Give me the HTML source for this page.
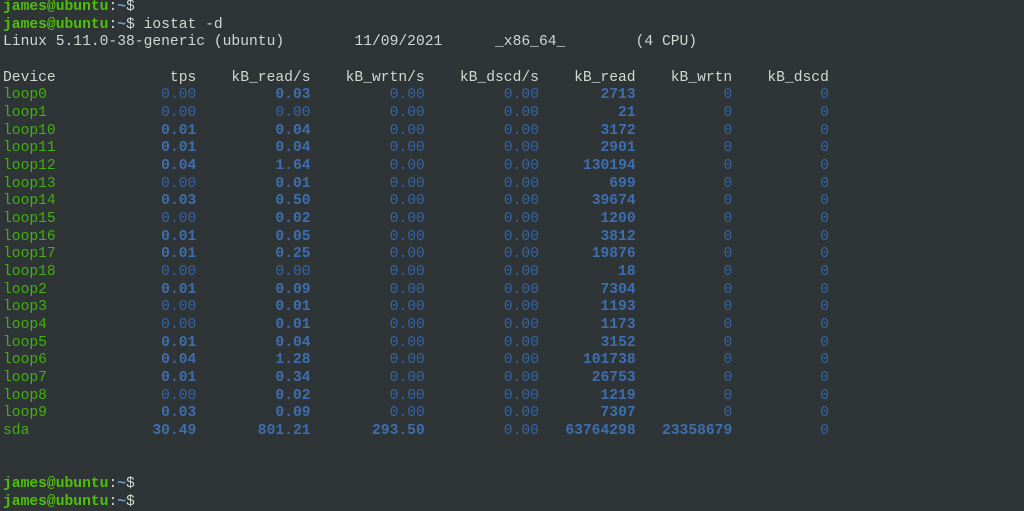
<!DOCTYPE html>
<html><head><style>
html,body{margin:0;padding:0;background:#2f3437;width:1024px;height:501px;overflow:hidden}
pre{margin:0;position:absolute;left:3px;top:-1px;font-family:"Liberation Mono",monospace;font-size:14.65px;line-height:17.67px;color:#d3d7cf;tab-size:8;-moz-tab-size:8}
.p{color:#4ec00a;font-weight:bold}
.t{color:#729fcf;font-weight:bold}
.g{color:#40b00c}
.b{color:#3465a4}
.B{color:#3d6fb0;font-weight:bold}
</style></head><body>
<pre><span class="p">james@ubuntu</span>:<span class="t">~</span>$
<span class="p">james@ubuntu</span>:<span class="t">~</span>$ iostat -d
Linux 5.11.0-38-generic (ubuntu) 	11/09/2021 	_x86_64_	(4 CPU)

Device             tps    kB_read/s    kB_wrtn/s    kB_dscd/s    kB_read    kB_wrtn    kB_dscd
<span class="g">loop0</span>  <span class="b">           0.00         </span><span class="B">0.03</span><span class="b">         0.00         0.00 </span><span class="B">      2713</span><span class="b">          0          0</span>
<span class="g">loop1</span>  <span class="b">           0.00         0.00         0.00         0.00 </span><span class="B">        21</span><span class="b">          0          0</span>
<span class="g">loop10</span> <span class="b">           </span><span class="B">0.01</span><span class="b">         </span><span class="B">0.04</span><span class="b">         0.00         0.00 </span><span class="B">      3172</span><span class="b">          0          0</span>
<span class="g">loop11</span> <span class="b">           </span><span class="B">0.01</span><span class="b">         </span><span class="B">0.04</span><span class="b">         0.00         0.00 </span><span class="B">      2901</span><span class="b">          0          0</span>
<span class="g">loop12</span> <span class="b">           </span><span class="B">0.04</span><span class="b">         </span><span class="B">1.64</span><span class="b">         0.00         0.00 </span><span class="B">    130194</span><span class="b">          0          0</span>
<span class="g">loop13</span> <span class="b">           0.00         </span><span class="B">0.01</span><span class="b">         0.00         0.00 </span><span class="B">       699</span><span class="b">          0          0</span>
<span class="g">loop14</span> <span class="b">           </span><span class="B">0.03</span><span class="b">         </span><span class="B">0.50</span><span class="b">         0.00         0.00 </span><span class="B">     39674</span><span class="b">          0          0</span>
<span class="g">loop15</span> <span class="b">           0.00         </span><span class="B">0.02</span><span class="b">         0.00         0.00 </span><span class="B">      1200</span><span class="b">          0          0</span>
<span class="g">loop16</span> <span class="b">           </span><span class="B">0.01</span><span class="b">         </span><span class="B">0.05</span><span class="b">         0.00         0.00 </span><span class="B">      3812</span><span class="b">          0          0</span>
<span class="g">loop17</span> <span class="b">           </span><span class="B">0.01</span><span class="b">         </span><span class="B">0.25</span><span class="b">         0.00         0.00 </span><span class="B">     19876</span><span class="b">          0          0</span>
<span class="g">loop18</span> <span class="b">           0.00         0.00         0.00         0.00 </span><span class="B">        18</span><span class="b">          0          0</span>
<span class="g">loop2</span>  <span class="b">           </span><span class="B">0.01</span><span class="b">         </span><span class="B">0.09</span><span class="b">         0.00         0.00 </span><span class="B">      7304</span><span class="b">          0          0</span>
<span class="g">loop3</span>  <span class="b">           0.00         </span><span class="B">0.01</span><span class="b">         0.00         0.00 </span><span class="B">      1193</span><span class="b">          0          0</span>
<span class="g">loop4</span>  <span class="b">           0.00         </span><span class="B">0.01</span><span class="b">         0.00         0.00 </span><span class="B">      1173</span><span class="b">          0          0</span>
<span class="g">loop5</span>  <span class="b">           </span><span class="B">0.01</span><span class="b">         </span><span class="B">0.04</span><span class="b">         0.00         0.00 </span><span class="B">      3152</span><span class="b">          0          0</span>
<span class="g">loop6</span>  <span class="b">           </span><span class="B">0.04</span><span class="b">         </span><span class="B">1.28</span><span class="b">         0.00         0.00 </span><span class="B">    101738</span><span class="b">          0          0</span>
<span class="g">loop7</span>  <span class="b">           </span><span class="B">0.01</span><span class="b">         </span><span class="B">0.34</span><span class="b">         0.00         0.00 </span><span class="B">     26753</span><span class="b">          0          0</span>
<span class="g">loop8</span>  <span class="b">           0.00         </span><span class="B">0.02</span><span class="b">         0.00         0.00 </span><span class="B">      1219</span><span class="b">          0          0</span>
<span class="g">loop9</span>  <span class="b">           </span><span class="B">0.03</span><span class="b">         </span><span class="B">0.09</span><span class="b">         0.00         0.00 </span><span class="B">      7307</span><span class="b">          0          0</span>
<span class="g">sda</span>    <span class="B">          30.49       801.21       293.50</span><span class="b">         0.00 </span><span class="B">  63764298   23358679</span><span class="b">          0</span>


<span class="p">james@ubuntu</span>:<span class="t">~</span>$
<span class="p">james@ubuntu</span>:<span class="t">~</span>$
</pre>
</body></html>
